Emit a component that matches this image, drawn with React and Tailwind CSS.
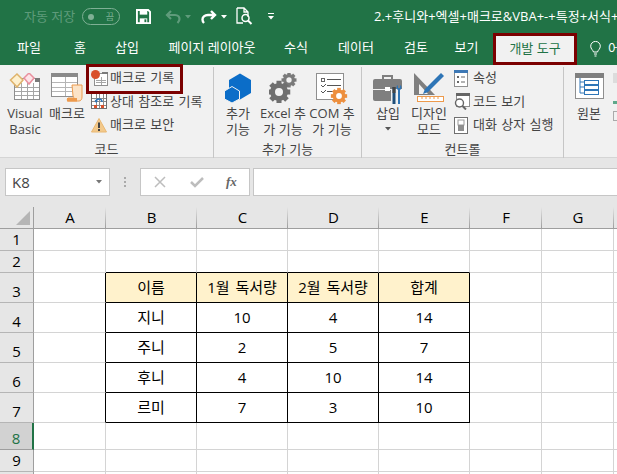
import React from "react";

const FONT = "font-['Open_Sans','Noto_Sans_CJK_KR',sans-serif]";

function Save() {
  return (
    <svg width="15" height="15" viewBox="0 0 16 16" className="block">
      <path d="M1 1h12l2 2v12H1z" fill="none" stroke="#fff" strokeWidth="2" />
      <rect x="4" y="1" width="8" height="5" fill="#fff" />
      <rect x="4" y="10" width="8" height="5" fill="#fff" />
      <rect x="9" y="11" width="2" height="3" fill="#217346" />
    </svg>
  );
}
function Undo({ color }) {
  return (
    <svg width="16" height="14" viewBox="0 0 16 14" className="block">
      <path d="M6 1 2 5l4 4M2.500 5H10c3 0 4.500 2 4.500 4s-1 3-2 4" fill="none" stroke={color} strokeWidth="2.200" />
    </svg>
  );
}
function Redo() {
  return (
    <svg width="16" height="14" viewBox="0 0 16 14" className="block">
      <path d="M10 1l4 4-4 4M13.500 5H7C3.500 5 1.500 7 1.500 9.500c0 1.500.5 2.500 1.500 3.500" fill="none" stroke="#fff" strokeWidth="2.400" />
    </svg>
  );
}
function Caret({ color = "#fff" }) {
  return (
    <svg width="6" height="4" viewBox="0 0 6 4" className="block">
      <path d="M0 0h6L3 3.500z" fill={color} />
    </svg>
  );
}
function Preview() {
  return (
    <svg width="17" height="19" viewBox="0 0 17 19" className="block">
      <path d="M1 1h7l4 4v5M8 1v4h4M1 1v15h6" fill="none" stroke="#fff" strokeWidth="1.300" />
      <circle cx="9.500" cy="11" r="3.500" fill="none" stroke="#fff" strokeWidth="1.500" />
      <path d="M12 13.500l3.500 3.500" stroke="#fff" strokeWidth="2" />
    </svg>
  );
}
function Customize() {
  return (
    <svg width="6" height="7" viewBox="0 0 6 7" className="block">
      <path d="M0 .500h6" stroke="#fff" />
      <path d="M0 3h6L3 6.500z" fill="#fff" />
    </svg>
  );
}

function SheetLines({ x, y, w, h, cols = 3, rows = 3, stroke = "#a6a6a6" }) {
  const out = [];
  for (let i = 1; i < rows; i++) {
    out.push(<path key={"r" + i} d={`M${x} ${Math.round(y + (h * i) / rows) + 0.5}h${w}`} stroke={stroke} />);
  }
  for (let i = 1; i < cols; i++) {
    out.push(<path key={"c" + i} d={`M${Math.round(x + (w * i) / cols) + 0.5} ${y}v${h}`} stroke={stroke} />);
  }
  return out;
}

function VisualBasicIcon() {
  return (
    <svg width="32" height="28" viewBox="0 0 32 28" className="block">
      <rect x="5.500" y="5.500" width="25" height="21" fill="#fff" stroke="#8f8f8f" />
      <rect x="26" y="5" width="5" height="4" fill="#7a7a7a" />
      <SheetLines x={6} y={10} w={24} h={16} cols={4} rows={4} />
      <path d="M8 1l6 6-6 7-6.500-7z" fill="#fdf0cf" stroke="#dfb36b" strokeWidth="1.500" />
      <path d="M20 0l5 5-5 6-5-6z" fill="#fde4e8" stroke="#e9909f" strokeWidth="1.500" />
    </svg>
  );
}
function MacroIcon() {
  return (
    <svg width="33" height="30" viewBox="0 0 33 30" className="block">
      <rect x=".500" y=".500" width="26" height="23" fill="#fff" stroke="#8f8f8f" />
      <rect x="0" y="0" width="27" height="4" fill="#8a8a8a" />
      <SheetLines x={1} y={4} w={25} h={19} cols={2} rows={4} stroke="#b5b5b5" />
      <path d="M21 12h10v12c0 2-1 4-3 4H17c-1 0-1-2 0-3h5c1 0 1-1 0-2z" fill="#fbe3c7" stroke="#ed9a4c" />
      <rect x="16" y="25" width="10" height="3.500" fill="#ed9a4c" />
    </svg>
  );
}
function RecordIcon() {
  return (
    <svg width="17" height="17" viewBox="0 0 17 17" className="block">
      <rect x="3.500" y="3.500" width="13" height="12" fill="#fff" stroke="#8f8f8f" />
      <rect x="11" y="2" width="6" height="2" fill="#7a7a7a" />
      <SheetLines x={5} y={7} w={10} h={8} cols={2} rows={3} />
      <circle cx="4.500" cy="4.500" r="4.500" fill="#d9512c" />
    </svg>
  );
}
function RelativeIcon() {
  return (
    <svg width="17" height="17" viewBox="0 0 17 17" className="block">
      <rect x=".500" y=".500" width="15" height="15" fill="#fff" stroke="#6f6f6f" />
      <SheetLines x={1} y={1} w={14} h={14} cols={4} rows={4} stroke="#8a8a8a" />
      <path d="M5 9a3 3 0 0 1 6 0" fill="none" stroke="#2e75b6" strokeWidth="1.400" />
      <path d="M3.500 6.500 5 10l2-2z" fill="#2e75b6" />
      <rect x="3" y="12" width="3" height="3" fill="#d9512c" />
      <rect x="10" y="12" width="3" height="3" fill="#d9512c" />
    </svg>
  );
}
function WarnIcon() {
  return (
    <svg width="16" height="15" viewBox="0 0 16 15" className="block">
      <path d="M8 .500 15.500 14H.500z" fill="#f3c98b" stroke="#e9b872" />
      <rect x="7" y="4.500" width="2" height="5.500" fill="#444" />
      <rect x="7" y="11" width="2" height="2" fill="#444" />
    </svg>
  );
}
function AddinIcon() {
  return (
    <svg width="28" height="30" viewBox="0 0 28 30" className="block">
      <path d="M16 .500 27 7v13l-11 6.500L5 20V7z" fill="#0b6dc8" />
      <path d="M8 13.500l7.500 4.500v8L8 30 .500 26v-8z" fill="#0b6dc8" stroke="#f1f1f1" />
    </svg>
  );
}
function Gear({ cx, cy, r, color }) {
  const teeth = [];
  for (let i = 0; i < 8; i++) {
    teeth.push(
      <rect
        key={i}
        x={cx - r * 0.28}
        y={cy - r * 1.25}
        width={r * 0.56}
        height={r * 0.6}
        fill={color}
        transform={`rotate(${i * 45} ${cx} ${cy})`}
      />
    );
  }
  return (
    <g>
      {teeth}
      <circle cx={cx} cy={cy} r={r * 0.72} fill="none" stroke={color} strokeWidth={r * 0.55} />
    </g>
  );
}
function ExcelAddinIcon() {
  return (
    <svg width="28" height="30" viewBox="0 0 28 30" className="block">
      <Gear cx={20} cy={7} r={6} color="#7a7a7a" />
      <Gear cx={10} cy={19} r={9} color="#6f6f6f" />
    </svg>
  );
}
function ComIcon() {
  return (
    <svg width="32" height="32" viewBox="0 0 32 32" className="block">
      <rect x=".500" y=".500" width="27" height="26" fill="#fff" stroke="#8f8f8f" />
      <rect x="5.500" y="5.500" width="3" height="3" fill="none" stroke="#666" />
      <path d="M11 6.500h14M11 12.500h14M11 18.500h8" stroke="#555" />
      <path d="M5 12l2 2 3-3M5 18l2 2 3-3" fill="none" stroke="#555" />
      <Gear cx={23} cy={23} r={6.500} color="#ed8f3e" />
    </svg>
  );
}
function InsertIcon() {
  return (
    <svg width="30" height="30" viewBox="0 0 30 30" className="block">
      <path d="M10 5V2h9v3" fill="none" stroke="#7f7f7f" strokeWidth="2" />
      <path d="M0 7a2 2 0 0 1 2-2h25a2 2 0 0 1 2 2v8H0z" fill="#7f7f7f" />
      <path d="M0 16h18v11H2a2 2 0 0 1-2-2z" fill="#7f7f7f" />
      <rect x="12" y="13" width="5" height="4" fill="#fff" />
      <path d="M21 13v17" stroke="#1f4e79" strokeWidth="3" />
      <path d="M21 13v6" stroke="#444" strokeWidth="3" />
      <path d="M27 11v3h-2v-3c-2 1-2 4 0 5v14h2V16c2-1 2-4 0-5z" fill="#2e75b6" />
    </svg>
  );
}
function DesignIcon() {
  return (
    <svg width="31" height="30" viewBox="0 0 31 30" className="block">
      <path d="M0 0l21 22H0z" fill="#7f7f7f" />
      <path d="M5 11l9 10H5z" fill="#f1f1f1" />
      <path d="M27 0l3 3-16 16-5 2 2-5z" fill="#2e75b6" />
      <rect x="3.500" y="23.500" width="26" height="5" fill="#fff" stroke="#ed9a4c" />
      <path d="M8 24v2M12 24v2M16 24v2M20 24v2M24 24v2" stroke="#ed9a4c" />
    </svg>
  );
}
function PropsIcon() {
  return (
    <svg width="14" height="17" viewBox="0 0 14 17" className="block">
      <rect x=".500" y=".500" width="13" height="16" fill="#fff" stroke="#8f8f8f" />
      <rect x="0" y="0" width="14" height="3" fill="#3d78b5" />
      <rect x="3" y="6" width="2" height="2" fill="#666" />
      <rect x="3" y="11" width="2" height="2" fill="#666" />
      <path d="M7 7h4M7 12h4" stroke="#666" />
    </svg>
  );
}
function CodeIcon() {
  return (
    <svg width="17" height="17" viewBox="0 0 17 17" className="block">
      <rect x="2.500" y=".500" width="13" height="13" fill="#fff" stroke="#8f8f8f" />
      <rect x="2" y="0" width="14" height="3" fill="#666" />
      <circle cx="5.500" cy="10" r="4" fill="#fff" stroke="#666" strokeWidth="1.400" />
      <path d="M8.500 13l3.500 3.500" stroke="#666" strokeWidth="2" />
    </svg>
  );
}
function DialogIcon() {
  return (
    <svg width="14" height="17" viewBox="0 0 14 17" className="block">
      <rect x=".500" y=".500" width="13" height="16" fill="#fff" stroke="#707070" />
      <rect x="4" y="3" width="6" height="5" fill="#fff" stroke="#9a9a9a" />
      <rect x="4" y="8" width="6" height="6" fill="#8f8f8f" />
    </svg>
  );
}
function SourceIcon() {
  return (
    <svg width="29" height="26" viewBox="0 0 29 26" className="block">
      <rect x=".500" y=".500" width="28" height="25" fill="#fff" stroke="#8f8f8f" />
      <rect x="0" y="0" width="29" height="5" fill="#7f7f7f" />
      <path d="M5 5v15h4M5 9h4M5 14h4" fill="none" stroke="#2e75b6" />
      <rect x="9.500" y="7.500" width="14" height="4" fill="#fff" stroke="#2e75b6" />
      <rect x="9.500" y="12.500" width="14" height="4" fill="#fff" stroke="#2e75b6" />
      <rect x="9.500" y="17.500" width="14" height="4" fill="#fff" stroke="#2e75b6" />
    </svg>
  );
}
function BulbIcon() {
  return (
    <svg width="11" height="16" viewBox="0 0 11 16" className="block">
      <path d="M3.500 11C3 9 .700 8 .700 5.200a4.800 4.800 0 0 1 9.600 0C10.300 8 8 9 7.500 11z" fill="none" stroke="#fff" />
      <path d="M4 13h3M4.500 15h2" stroke="#fff" />
    </svg>
  );
}

function BigButton({ icon, lines, w }) {
  return (
    <div className={`flex flex-col items-center shrink-0 ${w}`}>
      <div className="h-[38px] flex items-start justify-center pt-[6px]">{icon}</div>
      {lines.map((l) => (
        <div key={l} className="h-[16px] leading-[16px] whitespace-nowrap">
          {l}
        </div>
      ))}
    </div>
  );
}

function SmallRow({ icon, label, h = "h-[23px]" }) {
  return (
    <div className={`flex items-center ${h} whitespace-nowrap [word-spacing:1px]`}>
      <div className="w-[19px] flex justify-start shrink-0">{icon}</div>
      <span>{label}</span>
    </div>
  );
}

function Group({ label, w, children }) {
  return (
    <div className={`${w} flex flex-col h-[91px] border-r border-[#c6c6c6] shrink-0 mt-[2px]`}>
      <div className="flex h-[74px]">{children}</div>
      <div className="h-[16px] leading-[16px] text-center">{label}</div>
    </div>
  );
}

const tabs = [
  ["파일", "w-[58px]"],
  ["홈", "w-[44px]"],
  ["삽입", "w-[50px]"],
  ["페이지 레이아웃", "w-[120px]"],
  ["수식", "w-[48px]"],
  ["데이터", "w-[72px]"],
  ["검토", "w-[48px]"],
  ["보기", "w-[53px]"],
];

const rowDefs = [
  { n: 1, h: "h-[22px]" },
  { n: 2, h: "h-[22px]" },
  { n: 3, h: "h-[30px]", d: ["이름", "1월 독서량", "2월 독서량", "합계"], head: true },
  { n: 4, h: "h-[30px]", d: ["지니", "10", "4", "14"] },
  { n: 5, h: "h-[30px]", d: ["주니", "2", "5", "7"] },
  { n: 6, h: "h-[30px]", d: ["후니", "4", "10", "14"] },
  { n: 7, h: "h-[30px]", d: ["르미", "7", "3", "10"] },
  { n: 8, h: "h-[27px]", sel: true },
  { n: 9, h: "h-[22px]" },
  { n: "", h: "h-[22px]" },
];

function Row({ r }) {
  const inTable = !!r.d;
  const aboveTable = r.n === 2;
  const tableCell = inTable
    ? "border-r border-b border-black"
    : aboveTable
    ? "border-r border-b border-r-[#d4d4d4] border-b-black"
    : "border-r border-b border-[#d4d4d4]";
  return (
    <div className={`flex ${r.h} text-[15px] text-black`}>
      <div
        className={`w-[34px] shrink-0 flex items-end justify-center border-b leading-[21px] ${
          r.sel
            ? "bg-[#d2d2d2] text-[#217346] border-r-2 border-r-[#217346] border-b-[#9e9e9e]"
            : "bg-[#e6e6e6] border-r border-r-[#9e9e9e] border-b-[#b5b5b5]"
        }`}
      >
        {r.n}
      </div>
      <div className={`w-[72px] shrink-0 border-b border-r border-b-[#d4d4d4] ${inTable ? "border-r-black" : "border-r-[#d4d4d4]"}`} />
      {[0, 1, 2, 3].map((i) => (
        <div
          key={i}
          className={`w-[91px] shrink-0 flex items-center justify-center pb-[1px] [word-spacing:2px] ${tableCell} ${r.head ? "bg-[#fff2cc]" : ""}`}
        >
          {r.d ? r.d[i] : ""}
        </div>
      ))}
      <div className="w-[72px] shrink-0 border-r border-b border-[#d4d4d4]" />
      <div className="w-[72px] shrink-0 border-r border-b border-[#d4d4d4]" />
      <div className="flex-1 border-b border-[#d4d4d4]" />
    </div>
  );
}

function ColHead({ label, w }) {
  return (
    <div className={`${w} shrink-0 relative flex items-center justify-center text-[15px] text-black pb-[1px]`}>
      {label}
      <span className="absolute right-0 top-0 bottom-0 w-px bg-gradient-to-b from-[#e6e6e6] to-[#9e9e9e]" />
    </div>
  );
}

export default function App() {
  return (
    <div className={`w-[617px] h-[474px] overflow-hidden bg-white ${FONT} text-[13px] text-[#444]`}>
      {/* title bar */}
      <div className="h-[33px] bg-[#217346] flex items-center whitespace-nowrap overflow-hidden *:shrink-0">
        <span className="ml-[24px] w-[58px] text-[#5f9b7b]">자동 저장</span>
        <div className="w-[38px] h-[17px] rounded-full border border-[#7fb095] flex items-center justify-between px-[5px]">
          <span className="w-[6px] h-[6px] rounded-full bg-[#7fb095]" />
          <span className="text-[9px] leading-none text-[#7fb095]">끔</span>
        </div>
        <div className="ml-[16px]"><Save /></div>
        <div className="ml-[14px]"><Undo color="#5f9b7b" /></div>
        <div className="ml-[4px]"><Caret color="#5f9b7b" /></div>
        <div className="ml-[10px]"><Redo /></div>
        <div className="ml-[4px]"><Caret /></div>
        <div className="ml-[9px]"><Preview /></div>
        <div className="ml-[15px]"><Customize /></div>
        <span className="ml-[100px] text-white">2.+후니와+엑셀+매크로&VBA+-+특정+서식+</span>
      </div>
      {/* tabs */}
      <div className="h-[32px] bg-[#217346] flex text-white whitespace-nowrap *:shrink-0">
        {tabs.map(([t, w]) => (
          <div key={t} className={`${w} flex items-center justify-center pb-[2px]`}>
            {t}
          </div>
        ))}
        <div className="w-[84px] box-border border-[3px] border-[#7b0000] bg-[#f1f1f1] text-[#217346] flex items-center justify-center">
          개발 도구
        </div>
        <div className="ml-[13px] flex items-center gap-[7px]">
          <BulbIcon />
          <span>어</span>
        </div>
      </div>
      {/* ribbon */}
      <div className="h-[93px] bg-[#f1f1f1] border-b border-[#d5d5d5] flex items-start">
        <Group label="코드" w="w-[214px]">
          <div className="w-[5px] shrink-0" />
          <BigButton w="w-[40px]" icon={<VisualBasicIcon />} lines={["Visual", "Basic"]} />
          <BigButton w="w-[44px]" icon={<MacroIcon />} lines={["매크로"]} />
          <div className="flex flex-col pl-[2px] -mt-px">
            <div className="relative">
              <SmallRow icon={<RecordIcon />} label="매크로 기록" h="h-[24px]" />
              <span className="absolute -left-[5px] -top-[2px] w-[97px] h-[30px] border-[3px] border-[#7b0000]" />
            </div>
            <SmallRow icon={<RelativeIcon />} label="상대 참조로 기록" />
            <SmallRow icon={<WarnIcon />} label="매크로 보안" h="h-[24px]" />
          </div>
        </Group>
        <Group label="추가 기능" w="w-[148px]">
          <div className="w-[3px] shrink-0" />
          <BigButton w="w-[42px]" icon={<AddinIcon />} lines={["추가", "기능"]} />
          <div className="w-[1px] shrink-0" />
          <BigButton w="w-[46px]" icon={<ExcelAddinIcon />} lines={["Excel 추", "가 기능"]} />
          <BigButton w="w-[52px]" icon={<ComIcon />} lines={["COM 추", "가 기능"]} />
        </Group>
        <Group label="컨트롤" w="w-[202px]">
          <div className="w-[8px] shrink-0" />
          <div className="w-[36px] shrink-0 flex flex-col items-center">
            <div className="h-[38px] pt-[7px]"><InsertIcon /></div>
            <div className="h-[16px] leading-[16px]">삽입</div>
            <div className="h-[16px] flex items-center justify-center"><Caret color="#555" /></div>
          </div>
          <BigButton w="w-[46px]" icon={<DesignIcon />} lines={["디자인", "모드"]} />
          <div className="flex flex-col pl-[2px] -mt-px">
            <SmallRow icon={<PropsIcon />} label="속성" h="h-[24px]" />
            <SmallRow icon={<CodeIcon />} label="코드 보기" />
            <SmallRow icon={<DialogIcon />} label="대화 상자 실행" h="h-[24px]" />
          </div>
        </Group>
        <div className="flex mt-[2px]">
          <div className="w-[6px] shrink-0" />
          <BigButton w="w-[38px]" icon={<SourceIcon />} lines={["원본"]} />
          <div className="pl-[5px] flex flex-col pt-[6px]">
            <span className="w-[6px] h-[10px] bg-[#dcdcdc] block" />
            <span className="w-[6px] h-[3px] bg-[#5fa88a] block mt-[18px]" />
            <span className="w-[6px] h-[10px] border border-[#aaa] block mt-[7px]" />
          </div>
        </div>
      </div>
      {/* formula bar */}
      <div className="h-[49px] bg-[#e6e6e6] flex pt-[10px] items-start">
        <div className="ml-[5px] w-[105px] h-[28px] bg-white border border-[#c6c6c6] flex items-center justify-between pl-[6px] pr-[7px] text-[15px] text-[#444]">
          K8
          <Caret color="#777" />
        </div>
        <div className="w-[30px] h-[28px] flex flex-col items-center justify-center gap-[2px]">
          <span className="w-[2px] h-[2px] bg-[#aaa]" />
          <span className="w-[2px] h-[2px] bg-[#aaa]" />
          <span className="w-[2px] h-[2px] bg-[#aaa]" />
        </div>
        <div className="w-[110px] h-[28px] bg-white border border-[#c6c6c6] flex items-center">
          <svg width="12" height="12" viewBox="0 0 12 12" className="block ml-[13px]">
            <path d="M1 1l10 10M11 1 1 11" stroke="#bdbdbd" strokeWidth="1.500" />
          </svg>
          <svg width="14" height="12" viewBox="0 0 14 12" className="block ml-[24px]">
            <path d="M1 6l4 4 8-8" fill="none" stroke="#bdbdbd" strokeWidth="2.500" />
          </svg>
          <span className="ml-[22px] font-['Liberation_Serif',serif] italic font-bold text-[13px] text-[#666]">fx</span>
        </div>
        <div className="ml-[3px] flex-1 h-[28px] bg-white border-y border-l border-[#c6c6c6]" />
      </div>
      {/* column header */}
      <div className="h-[22px] bg-[#e6e6e6] flex border-b border-[#9e9e9e]">
        <div className="w-[34px] shrink-0 relative border-r border-[#9e9e9e] flex items-end justify-end pr-[3px] pb-[3px]">
          <svg width="14" height="14" viewBox="0 0 14 14" className="block">
            <path d="M14 0v14H0z" fill="#b5b5b5" />
          </svg>
        </div>
        <ColHead label="A" w="w-[72px]" />
        <ColHead label="B" w="w-[91px]" />
        <ColHead label="C" w="w-[91px]" />
        <ColHead label="D" w="w-[91px]" />
        <ColHead label="E" w="w-[91px]" />
        <ColHead label="F" w="w-[72px]" />
        <ColHead label="G" w="w-[72px]" />
      </div>
      {/* rows */}
      <div>
        {rowDefs.map((r) => (
          <Row key={r.n} r={r} />
        ))}
      </div>
    </div>
  );
}
